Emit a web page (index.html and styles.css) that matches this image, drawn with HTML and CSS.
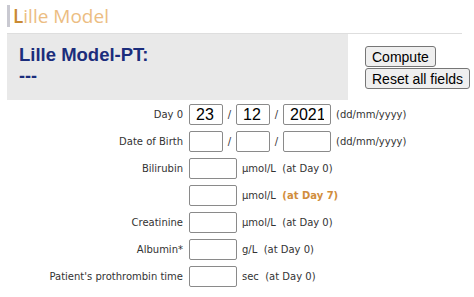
FILE: index.html
```html
<!DOCTYPE html>
<html lang="en">
<head>
  <meta charset="UTF-8">
  <title>Lille Model</title>
  <link rel="stylesheet" href="styles.css">
</head>
<body>
  <!-- PAGE TITLE -->
  <div class="page-title"><span class="first">L</span>ille Model</div>

  <!-- RESULT BOX + ACTIONS -->
  <div class="top-section">
    <div class="result-box">
      <div class="result-name">Lille Model-PT:</div>
      <div class="result-value">---</div>
    </div>
    <div class="actions">
      <button class="btn">Compute</button>
      <button class="btn">Reset all fields</button>
    </div>
  </div>

  <!-- FORM -->
  <div class="calc-form">
    <div class="row">
      <label class="label">Day 0</label>
      <div class="fields">
        <input class="field small" value="23"><span class="sep">/</span>
        <input class="field small" value="12"><span class="sep">/</span>
        <input class="field" value="2021">
        <span class="unit">(dd/mm/yyyy)</span>
      </div>
    </div>
    <div class="row">
      <label class="label">Date of Birth</label>
      <div class="fields">
        <input class="field small"><span class="sep">/</span>
        <input class="field small"><span class="sep">/</span>
        <input class="field">
        <span class="unit">(dd/mm/yyyy)</span>
      </div>
    </div>
    <div class="row">
      <label class="label">Bilirubin</label>
      <div class="fields">
        <input class="field">
        <span class="unit">µmol/L &nbsp;(at Day 0)</span>
      </div>
    </div>
    <div class="row">
      <label class="label"></label>
      <div class="fields">
        <input class="field">
        <span class="unit">µmol/L &nbsp;<b class="day7">(at Day 7)</b></span>
      </div>
    </div>
    <div class="row">
      <label class="label">Creatinine</label>
      <div class="fields">
        <input class="field">
        <span class="unit">µmol/L &nbsp;(at Day 0)</span>
      </div>
    </div>
    <div class="row">
      <label class="label">Albumin*</label>
      <div class="fields">
        <input class="field">
        <span class="unit">g/L &nbsp;(at Day 0)</span>
      </div>
    </div>
    <div class="row">
      <label class="label">Patient's prothrombin time</label>
      <div class="fields">
        <input class="field">
        <span class="unit">sec &nbsp;(at Day 0)</span>
      </div>
    </div>
  </div>
</body>
</html>
```

FILE: styles.css
```css
body {
  margin: 0;
  padding: 0 0 0 7px;
  font-family: "DejaVu Sans", Verdana, sans-serif;
  color: #333;
  background: #fff;
}

/* TITLE */
.page-title {
  margin-top: 5px;
  height: 22px;
  line-height: 22px;
  border-left: 3px solid #c9c9d1;
  padding-left: 3px;
  font-family: "Open Sans", sans-serif;
  font-size: 19px;
  color: #ecbd82;
}

.page-title .first {
  color: #c98a33;
  font-weight: 600;
}

/* TOP SECTION */
.top-section {
  margin-top: 6px;
  margin-right: 12px;
  border-top: 1px solid #dedede;
  display: flex;
  height: 66px;
}

.result-box {
  flex-shrink: 0;
  width: 329px;
  background: #e9e9e9;
  padding: 10px 0 0 12px;
}

.result-name {
  font-family: "Liberation Sans", Arial, sans-serif;
  font-weight: bold;
  font-size: 18.5px;
  line-height: 22px;
  color: #1b2d7c;
}

.result-value {
  font-family: "Liberation Sans", Arial, sans-serif;
  font-weight: bold;
  font-size: 18px;
  color: #1b2d7c;
  line-height: 20px;
}

.actions {
  padding: 12px 0 0 17px;
  display: flex;
  flex-direction: column;
  align-items: flex-start;
  gap: 1px;
}

.btn {
  white-space: nowrap;
  font-family: "Liberation Sans", Arial, sans-serif;
  font-size: 14px;
  color: #000;
  background: #efefef;
  border: 1px solid #767676;
  border-radius: 3px;
  height: 21px;
  padding: 0 6px;
  line-height: 18px;
}

/* FORM */
.calc-form {
  margin-top: 1px;
}

.row {
  display: flex;
  align-items: center;
  height: 27px;
}

.label {
  width: 176px;
  text-align: right;
  font-size: 10px;
  padding-right: 6px;
}

.fields {
  display: flex;
  align-items: center;
}

.field {
  box-sizing: border-box;
  width: 48px;
  height: 21px;
  border: 1px solid #8a8a8a;
  border-radius: 2px;
  padding: 0 6px;
  font-family: "Liberation Sans", Arial, sans-serif;
  font-size: 16px;
  color: #000;
}

.field.small {
  width: 34px;
}

.sep {
  font-size: 10px;
  width: 13px;
  text-align: center;
}

.unit {
  font-size: 10px;
  margin-left: 5px;
}

.day7 {
  color: #d18d3d;
}
```
